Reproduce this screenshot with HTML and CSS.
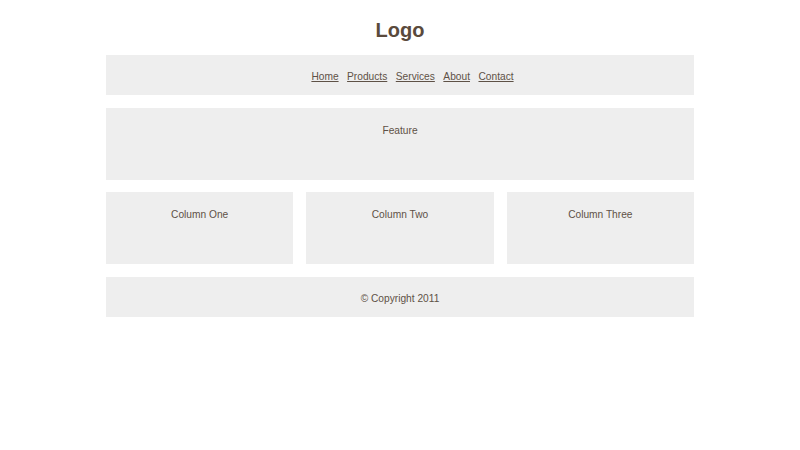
FILE: index.html
```html
<!DOCTYPE html>
<html lang="en">
<head>
  <meta charset="UTF-8">
  <title>Logo</title>
  <link rel="stylesheet" href="styles.css">
</head>
<body>
  <div class="page">
    <!-- Header -->
    <h1 class="logo">Logo</h1>

    <div class="nav box">
      <a href="#">Home</a>
      <a href="#">Products</a>
      <a href="#">Services</a>
      <a href="#">About</a>
      <a href="#">Contact</a>
    </div>

    <div class="feature box">Feature</div>

    <div class="columns">
      <div class="column box">Column One</div>
      <div class="column box">Column Two</div>
      <div class="column box">Column Three</div>
    </div>

    <div class="footer box">&copy; Copyright 2011</div>
  </div>
</body>
</html>
```

FILE: styles.css
```css
body {
  margin: 0;
  padding: 0;
  background-color: #fff;
  color: #5e5146;
  font-family: "Liberation Sans", Arial, sans-serif;
  font-size: 10.2px;
}

.page {
  width: 588px;
  margin: 0 auto;
  padding-top: 17px;
}

.logo {
  margin: 0 0 12px;
  font-size: 20px;
  line-height: 26px;
  text-align: center;
  color: #5a4a3c;
}

.box {
  background-color: #eee;
  text-align: center;
  line-height: 14px;
  box-sizing: border-box;
}

.nav {
  display: flex;
  justify-content: center;
  gap: 8.5px;
  height: 40px;
  padding: 15px 0 0 25px;
  margin-bottom: 13px;
}

.nav a {
  color: #5e5146;
}

.feature {
  height: 72px;
  padding-top: 16px;
  margin-bottom: 12px;
}

.columns {
  display: grid;
  grid-template-columns: repeat(3, 1fr);
  gap: 13px;
  margin-bottom: 13px;
}

.column {
  height: 72px;
  padding-top: 16px;
}

.footer {
  height: 40px;
  padding-top: 15px;
}
```
